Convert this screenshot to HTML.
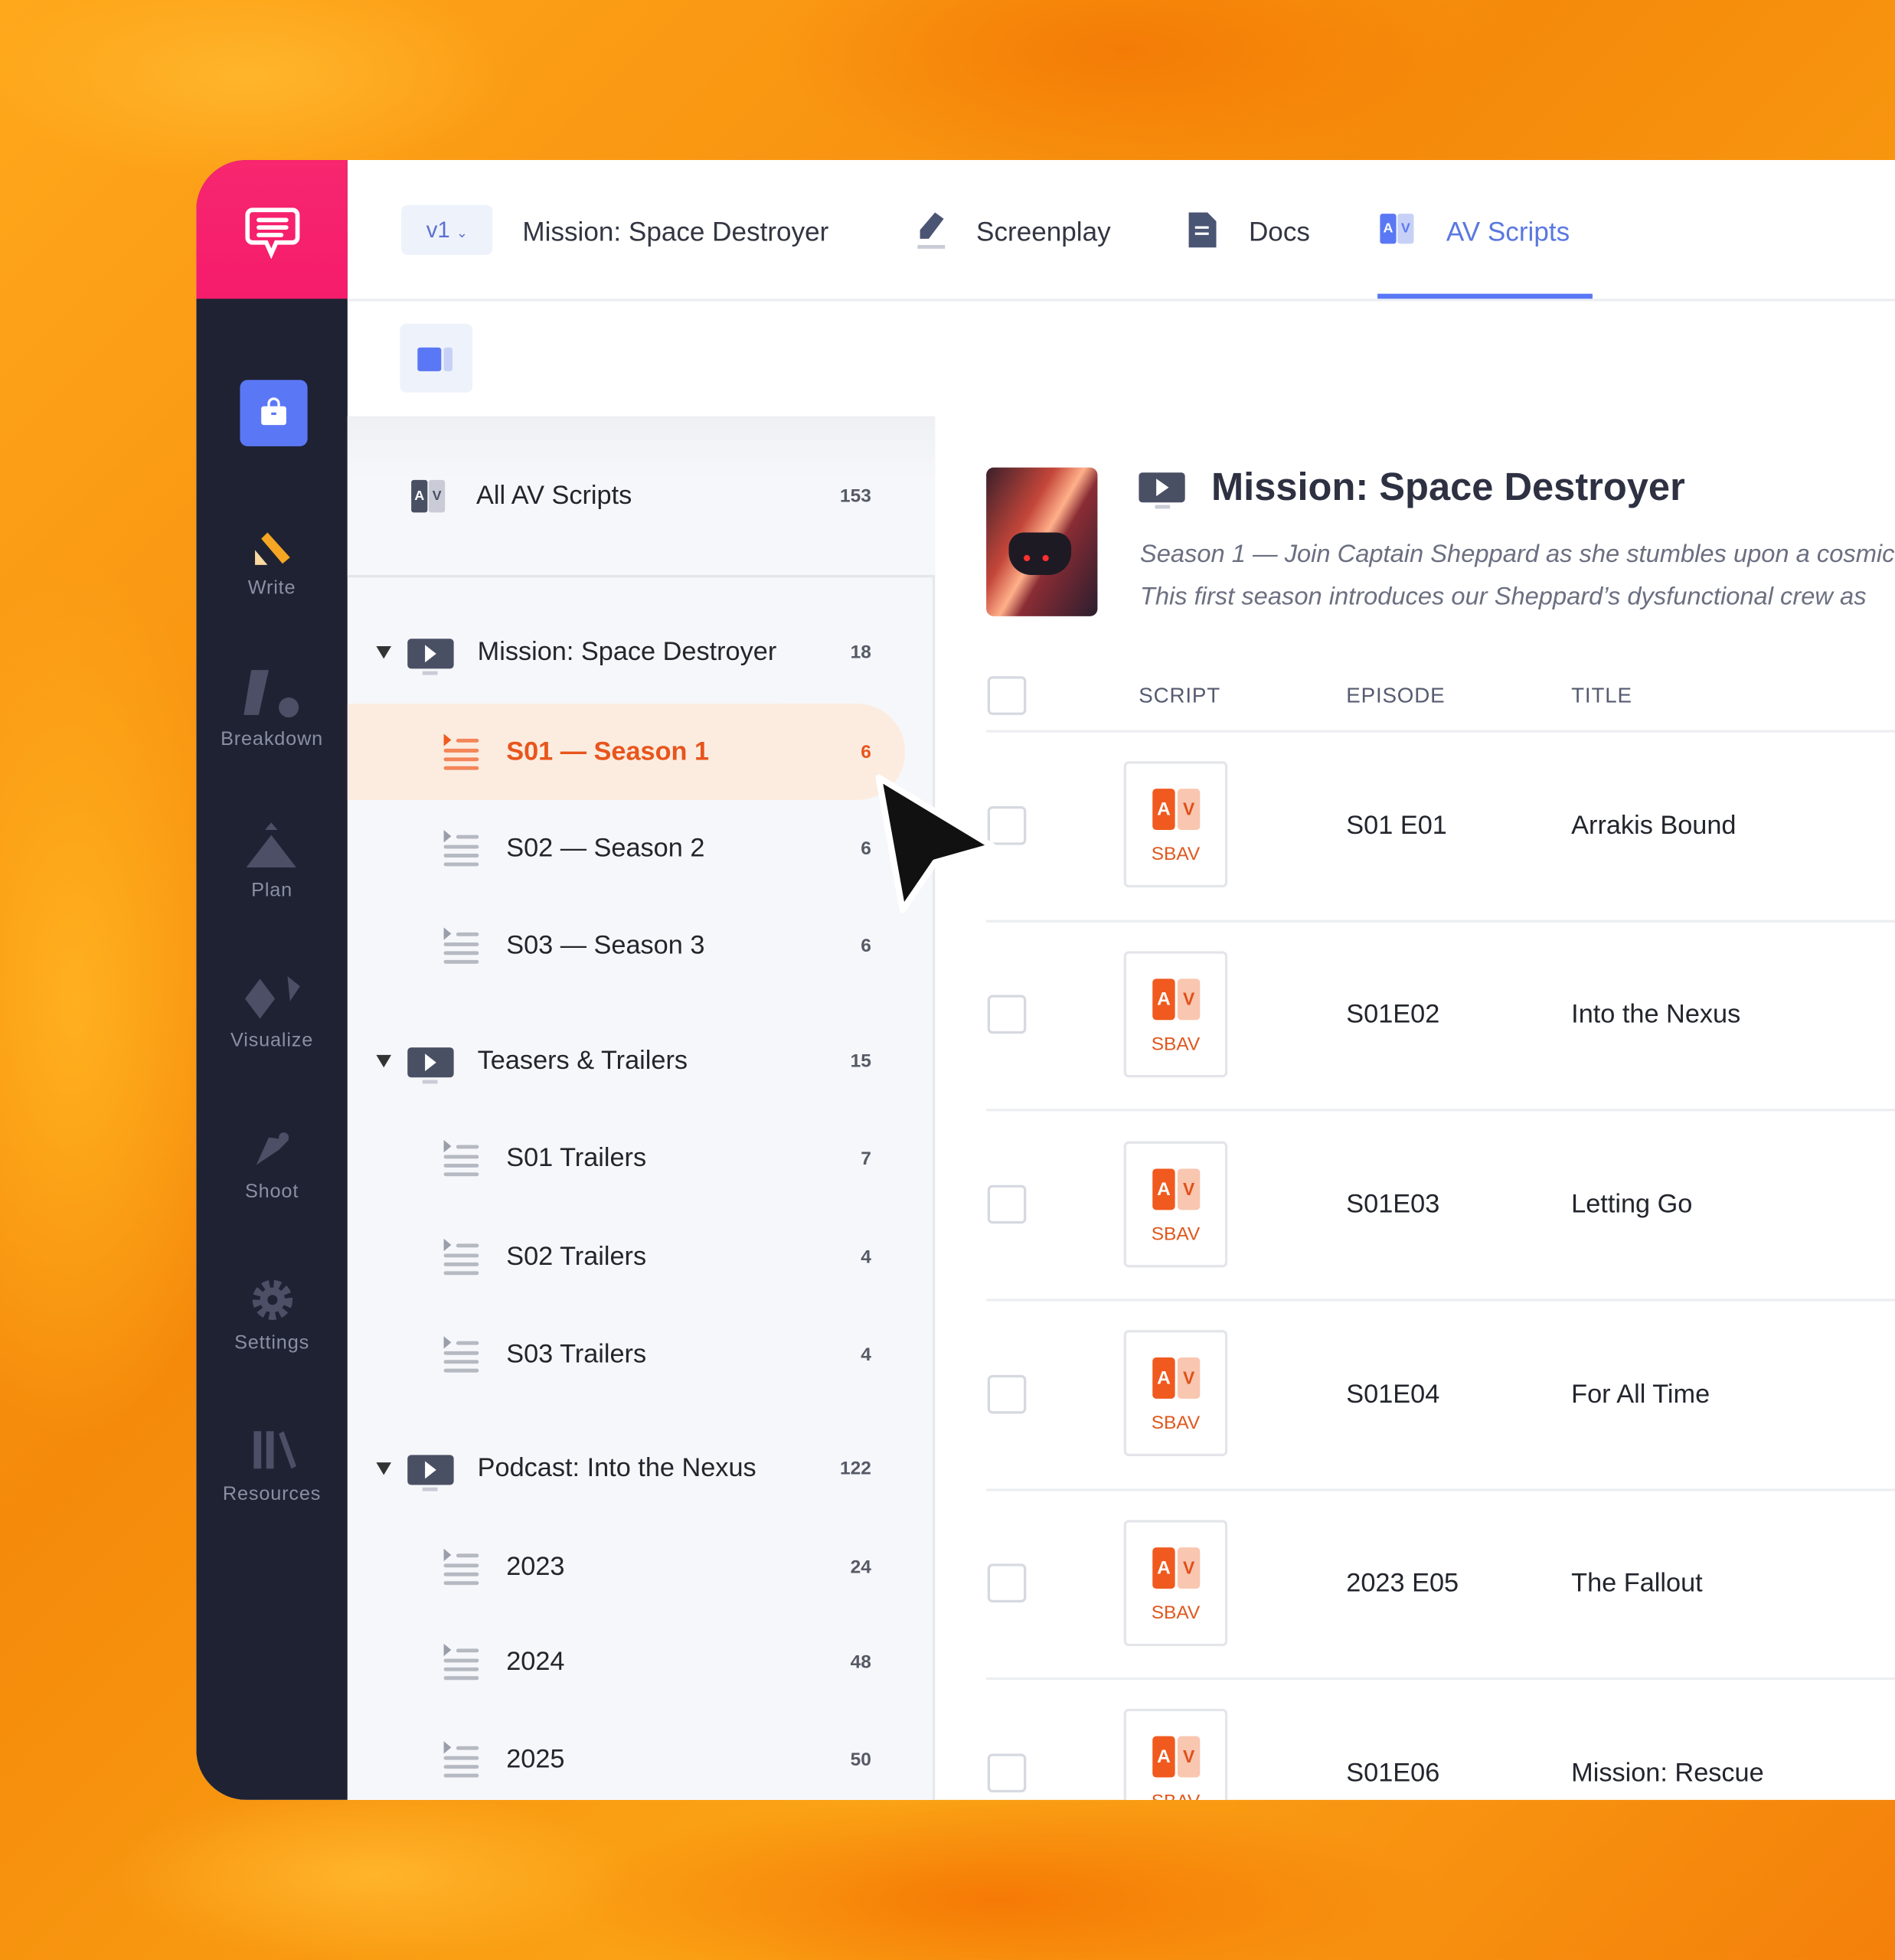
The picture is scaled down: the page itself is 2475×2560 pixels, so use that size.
<!DOCTYPE html>
<html><head><meta charset="utf-8"><style>
*{box-sizing:border-box;margin:0;padding:0}
html,body{width:2475px;height:2560px;overflow:hidden}
body{background:#f59a0c;font-family:"Liberation Sans",sans-serif}
#s{position:absolute;left:0;top:0;width:1516px;height:1568px;overflow:hidden;transform:scale(1.63259);transform-origin:0 0;
background:
radial-gradient(ellipse 300px 120px at 200px 60px,#ffb52a 0,transparent 70%),
radial-gradient(ellipse 400px 150px at 900px 40px,#f47c06 0,transparent 70%),
radial-gradient(ellipse 200px 500px at 60px 800px,#ffb01f 0,transparent 70%),
radial-gradient(ellipse 500px 120px at 800px 1520px,#f57a05 0,transparent 70%),
radial-gradient(ellipse 300px 100px at 300px 1500px,#ffb42a 0,transparent 70%),
linear-gradient(135deg,#ffa81c,#f58a0a 40%,#fba416 70%,#f4800a);}
.a{position:absolute}
#panel{left:157px;top:128px;width:1359px;height:1312px;border-radius:40px 0 0 40px;overflow:hidden;background:#fff}
#side{left:0;top:0;width:121px;height:1312px;background:#1f2233}
#pink{left:0;top:0;width:121px;height:111px;background:linear-gradient(180deg,#f7266e,#f51c6c)}
.lab{position:absolute;width:121px;text-align:center;color:#8a8fa3;font-size:15.5px;letter-spacing:.5px}
.t{position:absolute;white-space:nowrap;transform:translateY(-50%)}
.cnt{position:absolute;right:819px;font-size:15px;font-weight:bold;color:#555a66;transform:translateY(-50%)}
.row{font-size:21px;color:#23252d}
.cb{position:absolute;width:31px;height:31px;border:2px solid #d6d9e0;border-radius:4px;background:#fff}
.th{position:absolute;width:83px;height:101px;border:2px solid #e3e5ea;border-radius:4px;background:#fff}
.th .A{position:absolute;left:21px;top:20px;width:18px;height:33px;background:#f05a1e;border-radius:3px;color:#fff;font-weight:bold;font-size:15px;text-align:center;line-height:33px}
.th .V{position:absolute;left:41px;top:20px;width:18px;height:33px;background:#f9c6b0;border-radius:3px;color:#e0501a;font-weight:bold;font-size:14px;text-align:center;line-height:33px}
.th .S{position:absolute;left:0;width:79px;top:64px;text-align:center;color:#e0581e;font-size:15px}
.hl{position:absolute;width:727px;height:2px;background:#eceef2}
</style></head><body><div id="s">
<div class="a" id="panel">
 <div class="a" id="side">
  <div class="a" id="pink">
   <svg class="a" style="left:39px;top:37px" width="44" height="42" viewBox="0 0 44 42"><path d="M6 3h32a4 4 0 0 1 4 4v18a4 4 0 0 1-4 4H25l-4 9-4-9H6a4 4 0 0 1-4-4V7a4 4 0 0 1 4-4z" fill="none" stroke="#fff" stroke-width="3.5"/><path d="M11 11h22M11 17h22M11 23h18" stroke="#fff" stroke-width="3.5" stroke-linecap="round"/></svg>
  </div>
  <div class="a" style="left:35px;top:176px;width:54px;height:53px;background:#5a78f5;border-radius:6px"><svg class="a" style="left:15px;top:14px" width="24" height="24" viewBox="0 0 24 24"><rect x="2" y="7" width="20" height="15" rx="2" fill="#fff"/><path d="M8 8V5a4 4 0 0 1 8 0v3" fill="none" stroke="#fff" stroke-width="2"/><rect x="10" y="12" width="4" height="2" fill="#5a78f5"/></svg></div>
  <svg class="a" style="left:45px;top:296px" width="32" height="32" viewBox="0 0 32 32"><path d="M12 2l18 20-6 5L7 7z" fill="#f5a623"/><path d="M2 16l10 12H2z" fill="#f9d9a0"/></svg>
  <div class="lab" style="top:334px">Write</div>
  <svg class="a" style="left:38px;top:406px" width="48" height="42" viewBox="0 0 48 42"><path d="M6 2h14l-8 36H0z" fill="#4c4f66"/><circle cx="36" cy="32" r="8" fill="#4c4f66"/></svg>
  <div class="lab" style="top:455px">Breakdown</div>
  <svg class="a" style="left:40px;top:530px" width="40" height="38" viewBox="0 0 40 38"><path d="M20 0l5 6H15z" fill="#4c4f66"/><path d="M20 10l20 26H0z" fill="#4c4f66"/></svg>
  <div class="lab" style="top:576px">Plan</div>
  <svg class="a" style="left:37px;top:651px" width="50" height="40" viewBox="0 0 50 40"><path d="M14 4l12 16-12 16L2 20z" fill="#4c4f66"/><path d="M36 2l10 8-8 12z" fill="#4c4f66"/></svg>
  <div class="lab" style="top:696px">Visualize</div>
  <svg class="a" style="left:44px;top:776px" width="36" height="32" viewBox="0 0 36 32"><path d="M4 28L14 6l16 2-8 8z" fill="#4c4f66"/><circle cx="26" cy="6" r="4" fill="#4c4f66"/></svg>
  <div class="lab" style="top:817px">Shoot</div>
  <svg class="a" style="left:43px;top:894px" width="36" height="36" viewBox="0 0 36 36"><circle cx="18" cy="18" r="12" fill="none" stroke="#4c4f66" stroke-width="8" stroke-dasharray="5 3.2"/><circle cx="18" cy="18" r="10" fill="#4c4f66"/><circle cx="18" cy="18" r="4" fill="#1f2233"/></svg>
  <div class="lab" style="top:938px">Settings</div>
  <svg class="a" style="left:44px;top:1015px" width="36" height="34" viewBox="0 0 36 34"><rect x="2" y="2" width="6" height="30" fill="#4c4f66"/><rect x="12" y="2" width="6" height="30" fill="#4c4f66"/><path d="M22 4l4-2 10 28-4 2z" fill="#4c4f66"/></svg>
  <div class="lab" style="top:1059px">Resources</div>
 </div>
 <div class="a" style="left:121px;top:111px;width:1238px;height:2px;background:#eceef2"></div>
 <div class="a" style="left:164px;top:36px;width:73px;height:40px;background:#eef2fb;border-radius:5px;color:#5a6fd0;font-size:18px;line-height:40px;padding-left:20px">v1 <span style="font-size:11px">&#8964;</span></div>
 <div class="t" style="left:261px;top:58px;font-size:21.5px;color:#333642">Mission: Space Destroyer</div>
 <svg class="a" style="left:575px;top:40px" width="28" height="32" viewBox="0 0 28 32"><path d="M16 2l7 5-12 16H4V16z" fill="#4a5473"/><rect x="2" y="28" width="22" height="3" fill="#c9ccd6"/></svg>
 <div class="t" style="left:624px;top:58px;font-size:21.5px;color:#333642">Screenplay</div>
 <svg class="a" style="left:792px;top:40px" width="26" height="32" viewBox="0 0 26 32"><path d="M2 2h15l7 7v21H2z" fill="#4a5473"/><path d="M7 14h11M7 19h11" stroke="#fff" stroke-width="2"/></svg>
 <div class="t" style="left:842px;top:58px;font-size:21.5px;color:#333642">Docs</div>
 <div class="a" style="left:947px;top:43px;width:13px;height:24px;background:#5a78f5;border-radius:2px;color:#fff;font-size:11px;font-weight:bold;text-align:center;line-height:24px">A</div>
 <div class="a" style="left:961px;top:43px;width:13px;height:24px;background:#c7d1f7;border-radius:2px;color:#5a78f5;font-size:11px;font-weight:bold;text-align:center;line-height:24px">V</div>
 <div class="t" style="left:1000px;top:58px;font-size:21.5px;color:#5a78e0">AV Scripts</div>
 <div class="a" style="left:945px;top:107px;width:172px;height:4px;background:#5a78f5"></div>
 <div class="a" style="left:163px;top:131px;width:58px;height:55px;background:#eef2fb;border-radius:5px"><div class="a" style="left:14px;top:19px;width:19px;height:19px;background:#5a78f5;border-radius:2px"></div><div class="a" style="left:35px;top:19px;width:7px;height:19px;background:#c7d1f7;border-radius:2px"></div></div>
 <div class="a" style="left:121px;top:205px;width:470px;height:1110px;background:#f6f7fa;border-right:2px solid #e6e8ee"></div>
 <div class="a" style="left:121px;top:205px;width:470px;height:128px;background:linear-gradient(#eff0f4,#f6f7fa 40%)"></div>
 <div class="a" style="left:121px;top:332px;width:470px;height:2px;background:#e4e6ec"></div>
 <div class="a" style="left:172px;top:256px;width:13px;height:26px;background:#4a5064;border-radius:2px;color:#fff;font-size:11px;font-weight:bold;text-align:center;line-height:26px">A</div>
 <div class="a" style="left:186px;top:256px;width:13px;height:26px;background:#c9ccd6;border-radius:2px;color:#4a5064;font-size:11px;font-weight:bold;text-align:center;line-height:26px">V</div>
 <div class="t row" style="left:224px;top:269px">All AV Scripts</div>
 <div class="a" style="left:121px;top:435px;width:446px;height:77px;background:#fcece0;border-radius:0 38px 38px 0"></div>
</div>
<svg class="a" style="left:0;top:0" width="1516" height="1568">
 <g fill="#4a5064">
  <path d="M301 517h12l-6 10z" fill="#333"/><rect x="326" y="511" width="37" height="24" rx="3"/><rect x="338" y="537" width="12" height="3" fill="#c9ccd6"/><path d="M340 516l9 7-9 7z" fill="#fff"/>
  <path d="M301 844h12l-6 10z" fill="#333"/><rect x="326" y="838" width="37" height="24" rx="3"/><rect x="338" y="864" width="12" height="3" fill="#c9ccd6"/><path d="M340 843l9 7-9 7z" fill="#fff"/>
  <path d="M301 1170h12l-6 10z" fill="#333"/><rect x="326" y="1164" width="37" height="24" rx="3"/><rect x="338" y="1190" width="12" height="3" fill="#c9ccd6"/><path d="M340 1169l9 7-9 7z" fill="#fff"/>
 </g>
</svg>
<svg class="a" style="left:0;top:0" width="1516" height="1568">
<defs><g id="lst"><path d="M0 0l6 5-6 5z"/><rect x="10" y="4" width="18" height="3" rx="1.5" opacity=".7"/><rect x="0" y="12" width="28" height="3" rx="1.5" opacity=".7"/><rect x="0" y="19" width="28" height="3" rx="1.5" opacity=".7"/><rect x="0" y="26" width="28" height="3" rx="1.5" opacity=".7"/></g></defs>
<use href="#lst" x="355" y="587" fill="#f05a1e"/>
<use href="#lst" x="355" y="664" fill="#9a9ea9"/>
<use href="#lst" x="355" y="742" fill="#9a9ea9"/>
<use href="#lst" x="355" y="912" fill="#9a9ea9"/>
<use href="#lst" x="355" y="991" fill="#9a9ea9"/>
<use href="#lst" x="355" y="1069" fill="#9a9ea9"/>
<use href="#lst" x="355" y="1239" fill="#9a9ea9"/>
<use href="#lst" x="355" y="1315" fill="#9a9ea9"/>
<use href="#lst" x="355" y="1393" fill="#9a9ea9"/>
</svg>
<div style="position:absolute;left:0;top:0;width:1516px;height:1568px">
 <div class="cnt" style="top:397px">153</div>
 <div class="t row" style="left:382px;top:522px">Mission: Space Destroyer</div><div class="cnt" style="top:522px">18</div>
 <div class="t row" style="left:405px;top:602px;color:#e8551c;font-weight:bold">S01 — Season 1</div><div class="cnt" style="top:602px;color:#e8551c">6</div>
 <div class="t row" style="left:405px;top:679px">S02 — Season 2</div><div class="cnt" style="top:679px">6</div>
 <div class="t row" style="left:405px;top:757px">S03 — Season 3</div><div class="cnt" style="top:757px">6</div>
 <div class="t row" style="left:382px;top:849px">Teasers &amp; Trailers</div><div class="cnt" style="top:849px">15</div>
 <div class="t row" style="left:405px;top:927px">S01 Trailers</div><div class="cnt" style="top:927px">7</div>
 <div class="t row" style="left:405px;top:1006px">S02 Trailers</div><div class="cnt" style="top:1006px">4</div>
 <div class="t row" style="left:405px;top:1084px">S03 Trailers</div><div class="cnt" style="top:1084px">4</div>
 <div class="t row" style="left:382px;top:1175px">Podcast: Into the Nexus</div><div class="cnt" style="top:1175px">122</div>
 <div class="t row" style="left:405px;top:1254px">2023</div><div class="cnt" style="top:1254px">24</div>
 <div class="t row" style="left:405px;top:1330px">2024</div><div class="cnt" style="top:1330px">48</div>
 <div class="t row" style="left:405px;top:1408px">2025</div><div class="cnt" style="top:1408px">50</div>
</div>
<div class="a" style="left:789px;top:374px;width:89px;height:119px;border-radius:6px;overflow:hidden;background:linear-gradient(120deg,#3a1f2a 0,#c4463a 35%,#ffb08a 50%,#8a2c34 60%,#2a1e2e 100%)">
 <div class="a" style="left:18px;top:52px;width:50px;height:34px;border-radius:12px 12px 18px 18px;background:#1e1a24"></div>
 <div class="a" style="left:30px;top:70px;width:5px;height:5px;border-radius:50%;background:#ff3030"></div>
 <div class="a" style="left:45px;top:70px;width:5px;height:5px;border-radius:50%;background:#ff3030"></div>
</div>
<svg class="a" style="left:911px;top:378px" width="38" height="30" viewBox="0 0 38 30"><rect x="0" y="0" width="37" height="24" rx="3" fill="#4a5064"/><rect x="13" y="26" width="12" height="3" fill="#c9ccd6"/><path d="M14 5l10 7-10 7z" fill="#fff"/></svg>
<div class="t" style="left:969px;top:390px;font-size:31px;font-weight:bold;color:#2d3142">Mission: Space Destroyer</div>
<div class="t" style="left:912px;top:444px;font-size:20px;font-style:italic;color:#6b6f80">Season 1 — Join Captain Sheppard as she stumbles upon a cosmic</div>
<div class="t" style="left:912px;top:478px;font-size:20px;font-style:italic;color:#6b6f80">This first season introduces our Sheppard’s dysfunctional crew as</div>
<div class="cb" style="left:790px;top:541px"></div>
<div class="t" style="left:911px;top:557px;font-size:17px;color:#555b70;letter-spacing:.5px">SCRIPT</div>
<div class="t" style="left:1077px;top:557px;font-size:17px;color:#555b70;letter-spacing:.5px">EPISODE</div>
<div class="t" style="left:1257px;top:557px;font-size:17px;color:#555b70;letter-spacing:.5px">TITLE</div>
<div class="hl" style="left:789px;top:584px"></div>
<div class="cb" style="left:790px;top:645px"></div><div class="th" style="left:899px;top:609px"><div class="A">A</div><div class="V">V</div><div class="S">SBAV</div></div><div class="t row" style="left:1077px;top:661px">S01 E01</div><div class="t row" style="left:1257px;top:661px">Arrakis Bound</div>
<div class="hl" style="left:789px;top:736px"></div>
<div class="cb" style="left:790px;top:796px"></div><div class="th" style="left:899px;top:761px"><div class="A">A</div><div class="V">V</div><div class="S">SBAV</div></div><div class="t row" style="left:1077px;top:812px">S01E02</div><div class="t row" style="left:1257px;top:812px">Into the Nexus</div>
<div class="hl" style="left:789px;top:887px"></div>
<div class="cb" style="left:790px;top:948px"></div><div class="th" style="left:899px;top:913px"><div class="A">A</div><div class="V">V</div><div class="S">SBAV</div></div><div class="t row" style="left:1077px;top:964px">S01E03</div><div class="t row" style="left:1257px;top:964px">Letting Go</div>
<div class="hl" style="left:789px;top:1039px"></div>
<div class="cb" style="left:790px;top:1100px"></div><div class="th" style="left:899px;top:1064px"><div class="A">A</div><div class="V">V</div><div class="S">SBAV</div></div><div class="t row" style="left:1077px;top:1116px">S01E04</div><div class="t row" style="left:1257px;top:1116px">For All Time</div>
<div class="hl" style="left:789px;top:1191px"></div>
<div class="cb" style="left:790px;top:1251px"></div><div class="th" style="left:899px;top:1216px"><div class="A">A</div><div class="V">V</div><div class="S">SBAV</div></div><div class="t row" style="left:1077px;top:1267px">2023 E05</div><div class="t row" style="left:1257px;top:1267px">The Fallout</div>
<div class="hl" style="left:789px;top:1342px"></div>
<div style="position:absolute;left:0;top:1367px;width:1516px;height:73px;overflow:hidden">
<div class="cb" style="left:790px;top:36px"></div><div class="th" style="left:899px;top:0px"><div class="A">A</div><div class="V">V</div><div class="S">SBAV</div></div><div class="t row" style="left:1077px;top:52px">S01E06</div><div class="t row" style="left:1257px;top:52px">Mission: Rescue</div>
</div>
<svg class="a" style="left:0;top:0" width="1516" height="1568"><path d="M703 622L794 677 748 690 722 728z" fill="#111" stroke="#fff" stroke-width="5" stroke-linejoin="round"/></svg>
</div></body></html>
